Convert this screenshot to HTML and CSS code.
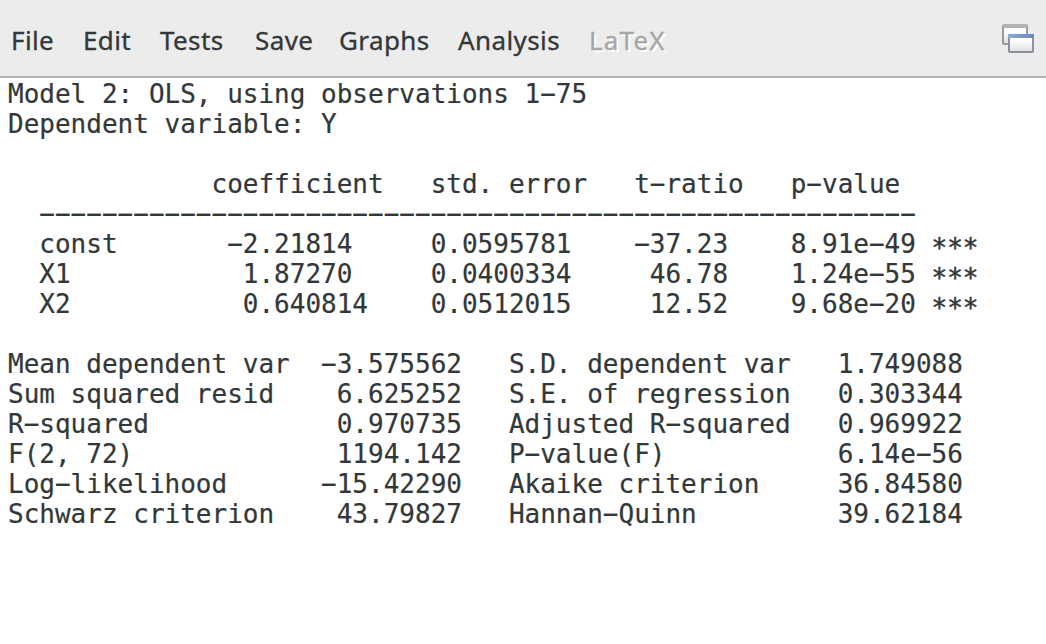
FILE: index.html
```html
<!DOCTYPE html>
<html lang="en">
<head>
    <meta charset="UTF-8">
    <title>gretl: model 2</title>
    <link rel="stylesheet" href="styles.css">
</head>
<body>
    <div class="menubar">
        <nav class="menu">
            <span class="item file">File</span>
            <span class="item edit">Edit</span>
            <span class="item tests">Tests</span>
            <span class="item save">Save</span>
            <span class="item graphs">Graphs</span>
            <span class="item analysis">Analysis</span>
            <span class="item latex disabled">LaTeX</span>
        </nav>
        <!-- window list button -->
        <svg class="windows" width="34" height="32" viewBox="0 0 34 32">
            <defs>
                <linearGradient id="pane" x1="0" y1="0" x2="0" y2="1">
                    <stop offset="0" stop-color="#ffffff"/>
                    <stop offset="0.4" stop-color="#fbfbfb"/>
                    <stop offset="1" stop-color="#dedede"/>
                </linearGradient>
                <linearGradient id="blue" x1="0" y1="0" x2="1" y2="0">
                    <stop offset="0" stop-color="#90a9d6"/>
                    <stop offset="1" stop-color="#6a86bd"/>
                </linearGradient>
            </defs>
            <rect x="2" y="2" width="24" height="19" rx="1" fill="url(#pane)" stroke="#9a9a9a" stroke-width="2"/>
            <rect x="2" y="1" width="24" height="4" fill="#b4b4b4"/>
            <rect x="8" y="12" width="24" height="17" rx="1" fill="url(#pane)" stroke="#8a90a3" stroke-width="2"/>
            <rect x="7" y="11" width="26" height="4" fill="url(#blue)"/>
        </svg>
    </div>
<pre class="output">Model 2: OLS, using observations 1−75
Dependent variable: Y

             coefficient   std. error   t−ratio   p−value
  −−−−−−−−−−−−−−−−−−−−−−−−−−−−−−−−−−−−−−−−−−−−−−−−−−−−−−−−
  const       −2.21814     0.0595781    −37.23    8.91e−49 <span class="stars">***</span>
  X1           1.87270     0.0400334     46.78    1.24e−55 <span class="stars">***</span>
  X2           0.640814    0.0512015     12.52    9.68e−20 <span class="stars">***</span>

Mean dependent var  −3.575562   S.D. dependent var   1.749088
Sum squared resid    6.625252   S.E. of regression   0.303344
R−squared            0.970735   Adjusted R−squared   0.969922
F(2, 72)             1194.142   P−value(F)           6.14e−56
Log−likelihood      −15.42290   Akaike criterion     36.84580
Schwarz criterion    43.79827   Hannan−Quinn         39.62184
</pre>
</body>
</html>
```

FILE: styles.css
```css
body {
    margin: 0;
    background-color: #fff;
    color: #323739;
}
.menubar {
    display: flex;
    justify-content: space-between;
    align-items: center;
    box-sizing: border-box;
    height: 78px;
    padding: 0 11px 0 11px;
    background-color: #ececec;
    border-bottom: 2px solid #b1b3b2;
}
.menu {
    display: flex;
    font-family: "Noto Sans", "Open Sans", sans-serif;
    font-size: 26px;
    line-height: 36px;
    letter-spacing: 0.4px;
    padding-top: 4px;
    -webkit-text-stroke: 0.3px;
}
.item {
    white-space: nowrap;
}
.file {
    width: 72px;
}
.edit {
    width: 77px;
}
.tests {
    width: 95px;
}
.save {
    width: 84px;
}
.graphs {
    width: 119px;
}
.analysis {
    width: 131px;
}
.latex {
    letter-spacing: 1.2px;
}
.disabled {
    color: #a6a6a6;
    text-shadow: 2px 2px 0 #fff;
}
.windows {
    display: block;
    margin-top: 2px;
}
.output {
    margin: 0;
    padding: 1px 0 0 8px;
    font-family: "DejaVu Sans Mono", monospace;
    font-size: 26px;
    line-height: 30px;
    -webkit-text-stroke: 0.2px;
}
/* asterisks sit on the middle of the digits */
.stars {
    line-height: 0;
    vertical-align: -4px;
    -webkit-text-stroke: 0.5px;
}
```
